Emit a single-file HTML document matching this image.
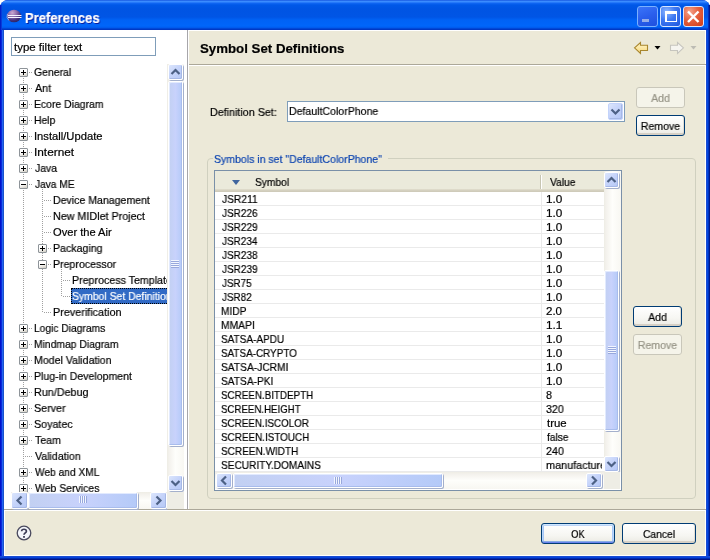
<!DOCTYPE html><html><head><meta charset="utf-8"><style>
*{box-sizing:border-box}
html,body{margin:0;padding:0;width:710px;height:560px;overflow:hidden;background:#fff;font-family:"Liberation Sans",sans-serif}
.a{position:absolute}
.t{position:absolute;white-space:nowrap;line-height:20px;height:20px;font-family:"Liberation Sans",sans-serif;-webkit-text-stroke:0.2px currentColor;will-change:transform}
svg{position:absolute;overflow:visible}
</style></head><body>
<div class="a" style="left:0;top:0;width:710px;height:560px;border-radius:8px 8px 0 0;overflow:hidden;background:#0831D9">
<div class="a" style="left:0;top:0;width:710px;height:30px;background:linear-gradient(180deg,#0A44D6 0px,#3C8EFF 1px,#3A8AFE 2px,#1268F4 3px,#0058E8 5px,#0054E3 9px,#0055E5 17px,#0062F5 20px,#0066FA 26px,#0058EA 28px,#0038C4 29px,#0038C4 30px)"></div>
</div>
<div class="a" style="left:0px;top:5px;width:2px;height:25px;background:linear-gradient(90deg,#0020C8 0,#0020C8 1px,#0A3AD8 1px)"></div>
<div class="a" style="left:708px;top:5px;width:2px;height:25px;background:linear-gradient(90deg,#0030C0 0,#0030C0 1px,#001890 1px)"></div>
<div class="a" style="left:0px;top:30px;width:4px;height:530px;background:linear-gradient(90deg,#0012CC 0,#0012CC 1px,#0A2ADA 1px,#0A2ADA 2px,#2264F0 2px,#2264F0 3px,#1A52CC 3px)"></div>
<div class="a" style="left:706px;top:30px;width:4px;height:530px;background:linear-gradient(90deg,#1A4CD2 0,#1A4CD2 1px,#0648E2 1px,#0648E2 2px,#0034BE 2px,#0034BE 3px,#00188F 3px)"></div>
<div class="a" style="left:0px;top:556px;width:710px;height:4px;background:linear-gradient(180deg,#1A4CD2 0,#1A4CD2 1px,#0644DE 1px,#0644DE 2px,#002CB0 2px,#002CB0 3px,#001488 3px)"></div>
<svg style="left:6px;top:9px" width="17" height="14" viewBox="0 0 17 14">
<defs><radialGradient id="eg" cx="0.38" cy="0.25" r="0.85"><stop offset="0" stop-color="#CBA9D2"/><stop offset="0.4" stop-color="#8A68A8"/><stop offset="0.72" stop-color="#3E2E7A"/><stop offset="1" stop-color="#22205A"/></radialGradient></defs>
<ellipse cx="8" cy="7" rx="7" ry="6.3" fill="url(#eg)"/>
<path d="M1.4 5 A7 6.3 0 0 0 3 11.5" fill="none" stroke="#C8D8FF" stroke-width="0.8" opacity="0.8"/>
<rect x="2" y="6" width="13.5" height="1" fill="#F4F4FF"/>
<rect x="2" y="8" width="13.5" height="1" fill="#F4F4FF"/>
</svg>
<div class="t" style="left:25px;top:8px;font-size:14px;font-weight:700;color:#fff;transform:scaleX(0.9300);transform-origin:0 0;text-shadow:1px 1px 0 #0A1E9E;">Preferences</div>
<div class="a" style="left:637px;top:6px;width:21px;height:21px;border:1px solid #7AB0FF;border-radius:3px;background:linear-gradient(160deg,#3A74FA 0,#2A5EEC 50%,#1E50DE 100%)"></div>
<div class="a" style="left:660px;top:6px;width:21px;height:21px;border:1px solid #D9E6FF;border-radius:3px;background:radial-gradient(circle at 30% 25%,#8DB6FF 0,#3D78F2 45%,#1F55DC 100%)"></div>
<div class="a" style="left:683px;top:6px;width:21px;height:21px;border:1px solid #D9E6FF;border-radius:3px;background:radial-gradient(circle at 30% 25%,#F5A48C 0,#E5603E 45%,#CF3C18 100%)"></div>
<div class="a" style="left:642px;top:19px;width:7px;height:3px;background:#94ACE8"></div>
<div class="a" style="left:665px;top:11px;width:12px;height:11px;border:1px solid #fff;border-left-width:2px;border-top-width:3px"></div>
<svg style="left:686px;top:10px" width="14" height="13" viewBox="0 0 14 13"><path d="M2 1.5 L12.5 12 M12.5 1.5 L2 12" stroke="#fff" stroke-width="2.4"/></svg>
<div class="a" style="left:4px;top:30px;width:702px;height:526px;background:#ECE9D8"></div>
<div class="a" style="left:705px;top:30px;width:1px;height:526px;background:#fff"></div>
<div class="a" style="left:4px;top:30px;width:1px;height:526px;background:#fff"></div>
<div class="a" style="left:4px;top:555px;width:702px;height:1px;background:#fff"></div>
<div class="a" style="left:4px;top:30px;width:183px;height:479px;background:#fff"></div>
<div class="a" style="left:187px;top:30px;width:1px;height:479px;background:#A7A6AA"></div>
<div class="a" style="left:188px;top:30px;width:1px;height:479px;background:#fff"></div>
<div class="a" style="left:189px;top:30px;width:517px;height:1px;background:#fff"></div>
<div class="a" style="left:189px;top:64px;width:517px;height:1px;background:#ACA899"></div>
<div class="a" style="left:189px;top:65px;width:517px;height:1px;background:#fff"></div>
<div class="a" style="left:4px;top:509px;width:702px;height:1px;background:#ACA899"></div>
<div class="a" style="left:4px;top:510px;width:702px;height:1px;background:#fff"></div>
<div class="a" style="left:11px;top:37px;width:145px;height:19px;border:1px solid #7F9DB9;background:#fff"></div>
<div class="t" style="left:13.73px;top:37px;font-size:11px;font-weight:400;color:#000;transform:scaleX(1.0426);transform-origin:0 0;">type filter text</div>
<div class="a" style="left:11px;top:64px;width:156px;height:428px;overflow:hidden">
<div class="a" style="left:12px;top:8px;width:1px;height:425px;background:repeating-linear-gradient(180deg,#A0A0A0 0,#A0A0A0 1px,transparent 1px,transparent 2px)"></div>
<div class="a" style="left:31px;top:125px;width:1px;height:124px;background:repeating-linear-gradient(180deg,#A0A0A0 0,#A0A0A0 1px,transparent 1px,transparent 2px)"></div>
<div class="a" style="left:50px;top:205px;width:1px;height:28px;background:repeating-linear-gradient(180deg,#A0A0A0 0,#A0A0A0 1px,transparent 1px,transparent 2px)"></div>
<div class="a" style="left:18px;top:8px;width:3px;height:1px;background:repeating-linear-gradient(90deg,#A0A0A0 0,#A0A0A0 1px,transparent 1px,transparent 2px)"></div>
<div class="a" style="left:8px;top:4px;width:9px;height:9px;border:1px solid #8E9499;background:linear-gradient(160deg,#fff 0,#fff 45%,#CFCBC0 100%);border-radius:1px"></div>
<div class="a" style="left:10px;top:8px;width:5px;height:1px;background:#000"></div>
<div class="a" style="left:12px;top:6px;width:1px;height:5px;background:#000"></div>
<div class="t" style="left:23.369999999999997px;top:-2px;font-size:11px;color:#000;transform:scaleX(0.9507);transform-origin:0 0;">General</div>
<div class="a" style="left:18px;top:24px;width:3px;height:1px;background:repeating-linear-gradient(90deg,#A0A0A0 0,#A0A0A0 1px,transparent 1px,transparent 2px)"></div>
<div class="a" style="left:8px;top:20px;width:9px;height:9px;border:1px solid #8E9499;background:linear-gradient(160deg,#fff 0,#fff 45%,#CFCBC0 100%);border-radius:1px"></div>
<div class="a" style="left:10px;top:24px;width:5px;height:1px;background:#000"></div>
<div class="a" style="left:12px;top:22px;width:1px;height:5px;background:#000"></div>
<div class="t" style="left:23.880000000000003px;top:14px;font-size:11px;color:#000;transform:scaleX(0.9739);transform-origin:0 0;">Ant</div>
<div class="a" style="left:18px;top:40px;width:3px;height:1px;background:repeating-linear-gradient(90deg,#A0A0A0 0,#A0A0A0 1px,transparent 1px,transparent 2px)"></div>
<div class="a" style="left:8px;top:36px;width:9px;height:9px;border:1px solid #8E9499;background:linear-gradient(160deg,#fff 0,#fff 45%,#CFCBC0 100%);border-radius:1px"></div>
<div class="a" style="left:10px;top:40px;width:5px;height:1px;background:#000"></div>
<div class="a" style="left:12px;top:38px;width:1px;height:5px;background:#000"></div>
<div class="t" style="left:23.04px;top:30px;font-size:11px;color:#000;transform:scaleX(0.9478);transform-origin:0 0;">Ecore Diagram</div>
<div class="a" style="left:18px;top:56px;width:3px;height:1px;background:repeating-linear-gradient(90deg,#A0A0A0 0,#A0A0A0 1px,transparent 1px,transparent 2px)"></div>
<div class="a" style="left:8px;top:52px;width:9px;height:9px;border:1px solid #8E9499;background:linear-gradient(160deg,#fff 0,#fff 45%,#CFCBC0 100%);border-radius:1px"></div>
<div class="a" style="left:10px;top:56px;width:5px;height:1px;background:#000"></div>
<div class="a" style="left:12px;top:54px;width:1px;height:5px;background:#000"></div>
<div class="t" style="left:23.049999999999997px;top:46px;font-size:11px;color:#000;transform:scaleX(0.9407);transform-origin:0 0;">Help</div>
<div class="a" style="left:18px;top:72px;width:3px;height:1px;background:repeating-linear-gradient(90deg,#A0A0A0 0,#A0A0A0 1px,transparent 1px,transparent 2px)"></div>
<div class="a" style="left:8px;top:68px;width:9px;height:9px;border:1px solid #8E9499;background:linear-gradient(160deg,#fff 0,#fff 45%,#CFCBC0 100%);border-radius:1px"></div>
<div class="a" style="left:10px;top:72px;width:5px;height:1px;background:#000"></div>
<div class="a" style="left:12px;top:70px;width:1px;height:5px;background:#000"></div>
<div class="t" style="left:22.869999999999997px;top:62px;font-size:11px;color:#000;transform:scaleX(1.0181);transform-origin:0 0;">Install/Update</div>
<div class="a" style="left:18px;top:88px;width:3px;height:1px;background:repeating-linear-gradient(90deg,#A0A0A0 0,#A0A0A0 1px,transparent 1px,transparent 2px)"></div>
<div class="a" style="left:8px;top:84px;width:9px;height:9px;border:1px solid #8E9499;background:linear-gradient(160deg,#fff 0,#fff 45%,#CFCBC0 100%);border-radius:1px"></div>
<div class="a" style="left:10px;top:88px;width:5px;height:1px;background:#000"></div>
<div class="a" style="left:12px;top:86px;width:1px;height:5px;background:#000"></div>
<div class="t" style="left:22.810000000000002px;top:78px;font-size:11px;color:#000;transform:scaleX(1.0759);transform-origin:0 0;">Internet</div>
<div class="a" style="left:18px;top:104px;width:3px;height:1px;background:repeating-linear-gradient(90deg,#A0A0A0 0,#A0A0A0 1px,transparent 1px,transparent 2px)"></div>
<div class="a" style="left:8px;top:100px;width:9px;height:9px;border:1px solid #8E9499;background:linear-gradient(160deg,#fff 0,#fff 45%,#CFCBC0 100%);border-radius:1px"></div>
<div class="a" style="left:10px;top:104px;width:5px;height:1px;background:#000"></div>
<div class="a" style="left:12px;top:102px;width:1px;height:5px;background:#000"></div>
<div class="t" style="left:23.740000000000002px;top:94px;font-size:11px;color:#000;transform:scaleX(0.9533);transform-origin:0 0;">Java</div>
<div class="a" style="left:18px;top:120px;width:3px;height:1px;background:repeating-linear-gradient(90deg,#A0A0A0 0,#A0A0A0 1px,transparent 1px,transparent 2px)"></div>
<div class="a" style="left:8px;top:116px;width:9px;height:9px;border:1px solid #8E9499;background:linear-gradient(160deg,#fff 0,#fff 45%,#CFCBC0 100%);border-radius:1px"></div>
<div class="a" style="left:10px;top:120px;width:5px;height:1px;background:#000"></div>
<div class="t" style="left:23.740000000000002px;top:110px;font-size:11px;color:#000;transform:scaleX(0.9249);transform-origin:0 0;">Java ME</div>
<div class="a" style="left:33px;top:136px;width:7px;height:1px;background:repeating-linear-gradient(90deg,#A0A0A0 0,#A0A0A0 1px,transparent 1px,transparent 2px)"></div>
<div class="t" style="left:42.03px;top:126px;font-size:11px;color:#000;transform:scaleX(0.9604);transform-origin:0 0;">Device Management</div>
<div class="a" style="left:33px;top:152px;width:7px;height:1px;background:repeating-linear-gradient(90deg,#A0A0A0 0,#A0A0A0 1px,transparent 1px,transparent 2px)"></div>
<div class="t" style="left:42.02px;top:142px;font-size:11px;color:#000;transform:scaleX(0.9767);transform-origin:0 0;">New MIDlet Project</div>
<div class="a" style="left:33px;top:168px;width:7px;height:1px;background:repeating-linear-gradient(90deg,#A0A0A0 0,#A0A0A0 1px,transparent 1px,transparent 2px)"></div>
<div class="t" style="left:42.37px;top:158px;font-size:11px;color:#000;transform:scaleX(1.0104);transform-origin:0 0;">Over the Air</div>
<div class="a" style="left:37px;top:184px;width:3px;height:1px;background:repeating-linear-gradient(90deg,#A0A0A0 0,#A0A0A0 1px,transparent 1px,transparent 2px)"></div>
<div class="a" style="left:27px;top:180px;width:9px;height:9px;border:1px solid #8E9499;background:linear-gradient(160deg,#fff 0,#fff 45%,#CFCBC0 100%);border-radius:1px"></div>
<div class="a" style="left:29px;top:184px;width:5px;height:1px;background:#000"></div>
<div class="a" style="left:31px;top:182px;width:1px;height:5px;background:#000"></div>
<div class="t" style="left:42.03px;top:174px;font-size:11px;color:#000;transform:scaleX(0.9640);transform-origin:0 0;">Packaging</div>
<div class="a" style="left:37px;top:200px;width:3px;height:1px;background:repeating-linear-gradient(90deg,#A0A0A0 0,#A0A0A0 1px,transparent 1px,transparent 2px)"></div>
<div class="a" style="left:27px;top:196px;width:9px;height:9px;border:1px solid #8E9499;background:linear-gradient(160deg,#fff 0,#fff 45%,#CFCBC0 100%);border-radius:1px"></div>
<div class="a" style="left:29px;top:200px;width:5px;height:1px;background:#000"></div>
<div class="t" style="left:42.03px;top:190px;font-size:11px;color:#000;transform:scaleX(0.9634);transform-origin:0 0;">Preprocessor</div>
<div class="a" style="left:52px;top:216px;width:7px;height:1px;background:repeating-linear-gradient(90deg,#A0A0A0 0,#A0A0A0 1px,transparent 1px,transparent 2px)"></div>
<div class="t" style="left:61.03px;top:206px;font-size:11px;color:#000;transform:scaleX(0.9686);transform-origin:0 0;">Preprocess Templates</div>
<div class="a" style="left:52px;top:232px;width:7px;height:1px;background:repeating-linear-gradient(90deg,#A0A0A0 0,#A0A0A0 1px,transparent 1px,transparent 2px)"></div>
<div class="a" style="left:60px;top:224px;width:100px;height:16px;background:#316AC5;outline:1px dotted #000;outline-offset:-1px"></div>
<div class="t" style="left:61.43000000000001px;top:222px;font-size:11px;color:#fff;transform:scaleX(0.9470);transform-origin:0 0;">Symbol Set Definitions</div>
<div class="a" style="left:33px;top:248px;width:7px;height:1px;background:repeating-linear-gradient(90deg,#A0A0A0 0,#A0A0A0 1px,transparent 1px,transparent 2px)"></div>
<div class="t" style="left:42.01px;top:238px;font-size:11px;color:#000;transform:scaleX(0.9838);transform-origin:0 0;">Preverification</div>
<div class="a" style="left:18px;top:264px;width:3px;height:1px;background:repeating-linear-gradient(90deg,#A0A0A0 0,#A0A0A0 1px,transparent 1px,transparent 2px)"></div>
<div class="a" style="left:8px;top:260px;width:9px;height:9px;border:1px solid #8E9499;background:linear-gradient(160deg,#fff 0,#fff 45%,#CFCBC0 100%);border-radius:1px"></div>
<div class="a" style="left:10px;top:264px;width:5px;height:1px;background:#000"></div>
<div class="a" style="left:12px;top:262px;width:1px;height:5px;background:#000"></div>
<div class="t" style="left:23.060000000000002px;top:254px;font-size:11px;color:#000;transform:scaleX(0.9316);transform-origin:0 0;">Logic Diagrams</div>
<div class="a" style="left:18px;top:280px;width:3px;height:1px;background:repeating-linear-gradient(90deg,#A0A0A0 0,#A0A0A0 1px,transparent 1px,transparent 2px)"></div>
<div class="a" style="left:8px;top:276px;width:9px;height:9px;border:1px solid #8E9499;background:linear-gradient(160deg,#fff 0,#fff 45%,#CFCBC0 100%);border-radius:1px"></div>
<div class="a" style="left:10px;top:280px;width:5px;height:1px;background:#000"></div>
<div class="a" style="left:12px;top:278px;width:1px;height:5px;background:#000"></div>
<div class="t" style="left:23.049999999999997px;top:270px;font-size:11px;color:#000;transform:scaleX(0.9405);transform-origin:0 0;">Mindmap Diagram</div>
<div class="a" style="left:18px;top:296px;width:3px;height:1px;background:repeating-linear-gradient(90deg,#A0A0A0 0,#A0A0A0 1px,transparent 1px,transparent 2px)"></div>
<div class="a" style="left:8px;top:292px;width:9px;height:9px;border:1px solid #8E9499;background:linear-gradient(160deg,#fff 0,#fff 45%,#CFCBC0 100%);border-radius:1px"></div>
<div class="a" style="left:10px;top:296px;width:5px;height:1px;background:#000"></div>
<div class="a" style="left:12px;top:294px;width:1px;height:5px;background:#000"></div>
<div class="t" style="left:23.03px;top:286px;font-size:11px;color:#000;transform:scaleX(0.9627);transform-origin:0 0;">Model Validation</div>
<div class="a" style="left:18px;top:312px;width:3px;height:1px;background:repeating-linear-gradient(90deg,#A0A0A0 0,#A0A0A0 1px,transparent 1px,transparent 2px)"></div>
<div class="a" style="left:8px;top:308px;width:9px;height:9px;border:1px solid #8E9499;background:linear-gradient(160deg,#fff 0,#fff 45%,#CFCBC0 100%);border-radius:1px"></div>
<div class="a" style="left:10px;top:312px;width:5px;height:1px;background:#000"></div>
<div class="a" style="left:12px;top:310px;width:1px;height:5px;background:#000"></div>
<div class="t" style="left:23.03px;top:302px;font-size:11px;color:#000;transform:scaleX(0.9588);transform-origin:0 0;">Plug-in Development</div>
<div class="a" style="left:18px;top:328px;width:3px;height:1px;background:repeating-linear-gradient(90deg,#A0A0A0 0,#A0A0A0 1px,transparent 1px,transparent 2px)"></div>
<div class="a" style="left:8px;top:324px;width:9px;height:9px;border:1px solid #8E9499;background:linear-gradient(160deg,#fff 0,#fff 45%,#CFCBC0 100%);border-radius:1px"></div>
<div class="a" style="left:10px;top:328px;width:5px;height:1px;background:#000"></div>
<div class="a" style="left:12px;top:326px;width:1px;height:5px;background:#000"></div>
<div class="t" style="left:23.020000000000003px;top:318px;font-size:11px;color:#000;transform:scaleX(0.9801);transform-origin:0 0;">Run/Debug</div>
<div class="a" style="left:18px;top:344px;width:3px;height:1px;background:repeating-linear-gradient(90deg,#A0A0A0 0,#A0A0A0 1px,transparent 1px,transparent 2px)"></div>
<div class="a" style="left:8px;top:340px;width:9px;height:9px;border:1px solid #8E9499;background:linear-gradient(160deg,#fff 0,#fff 45%,#CFCBC0 100%);border-radius:1px"></div>
<div class="a" style="left:10px;top:344px;width:5px;height:1px;background:#000"></div>
<div class="a" style="left:12px;top:342px;width:1px;height:5px;background:#000"></div>
<div class="t" style="left:23.409999999999997px;top:334px;font-size:11px;color:#000;transform:scaleX(0.9772);transform-origin:0 0;">Server</div>
<div class="a" style="left:18px;top:360px;width:3px;height:1px;background:repeating-linear-gradient(90deg,#A0A0A0 0,#A0A0A0 1px,transparent 1px,transparent 2px)"></div>
<div class="a" style="left:8px;top:356px;width:9px;height:9px;border:1px solid #8E9499;background:linear-gradient(160deg,#fff 0,#fff 45%,#CFCBC0 100%);border-radius:1px"></div>
<div class="a" style="left:10px;top:360px;width:5px;height:1px;background:#000"></div>
<div class="a" style="left:12px;top:358px;width:1px;height:5px;background:#000"></div>
<div class="t" style="left:23.409999999999997px;top:350px;font-size:11px;color:#000;transform:scaleX(0.9746);transform-origin:0 0;">Soyatec</div>
<div class="a" style="left:18px;top:376px;width:3px;height:1px;background:repeating-linear-gradient(90deg,#A0A0A0 0,#A0A0A0 1px,transparent 1px,transparent 2px)"></div>
<div class="a" style="left:8px;top:372px;width:9px;height:9px;border:1px solid #8E9499;background:linear-gradient(160deg,#fff 0,#fff 45%,#CFCBC0 100%);border-radius:1px"></div>
<div class="a" style="left:10px;top:376px;width:5px;height:1px;background:#000"></div>
<div class="a" style="left:12px;top:374px;width:1px;height:5px;background:#000"></div>
<div class="t" style="left:23.659999999999997px;top:366px;font-size:11px;color:#000;transform:scaleX(0.9640);transform-origin:0 0;">Team</div>
<div class="a" style="left:14px;top:392px;width:7px;height:1px;background:repeating-linear-gradient(90deg,#A0A0A0 0,#A0A0A0 1px,transparent 1px,transparent 2px)"></div>
<div class="t" style="left:23.85px;top:382px;font-size:11px;color:#000;transform:scaleX(0.9622);transform-origin:0 0;">Validation</div>
<div class="a" style="left:18px;top:408px;width:3px;height:1px;background:repeating-linear-gradient(90deg,#A0A0A0 0,#A0A0A0 1px,transparent 1px,transparent 2px)"></div>
<div class="a" style="left:8px;top:404px;width:9px;height:9px;border:1px solid #8E9499;background:linear-gradient(160deg,#fff 0,#fff 45%,#CFCBC0 100%);border-radius:1px"></div>
<div class="a" style="left:10px;top:408px;width:5px;height:1px;background:#000"></div>
<div class="a" style="left:12px;top:406px;width:1px;height:5px;background:#000"></div>
<div class="t" style="left:23.86px;top:398px;font-size:11px;color:#000;transform:scaleX(0.9257);transform-origin:0 0;">Web and XML</div>
<div class="a" style="left:18px;top:424px;width:3px;height:1px;background:repeating-linear-gradient(90deg,#A0A0A0 0,#A0A0A0 1px,transparent 1px,transparent 2px)"></div>
<div class="a" style="left:8px;top:420px;width:9px;height:9px;border:1px solid #8E9499;background:linear-gradient(160deg,#fff 0,#fff 45%,#CFCBC0 100%);border-radius:1px"></div>
<div class="a" style="left:10px;top:424px;width:5px;height:1px;background:#000"></div>
<div class="a" style="left:12px;top:422px;width:1px;height:5px;background:#000"></div>
<div class="t" style="left:23.85px;top:414px;font-size:11px;color:#000;transform:scaleX(0.9520);transform-origin:0 0;">Web Services</div>
</div>
<div class="a" style="left:167px;top:64px;width:17px;height:428px;background:linear-gradient(90deg,#EEEDE5 0,#F3F1EC 2px,#FEFEFB 50%,#F8F7F2 100%)"></div>
<div class="a" style="left:168px;top:64px;width:15px;height:16px;border:1px solid #FFFFFF;border-radius:2px;background:linear-gradient(135deg,#DCE6FC 0,#C6D4FA 45%,#B5C8F6 100%);box-shadow:1px 1px 0 #A4B0CC,inset -1px -1px 0 #A6B8E6"></div>
<svg style="left:0;top:0" width="710" height="560"><path d="M171.5 74.0 L175.5 70.0 L179.5 74.0" fill="none" stroke="#4D6185" stroke-width="2.2"/></svg>
<div class="a" style="left:168px;top:81px;width:15px;height:365px;border:1px solid #FFFFFF;border-radius:2px;background:linear-gradient(90deg,#C2D0F2 0,#C8D2FC 50%,#B4CAF8 100%);box-shadow:1px 1px 0 #A4B0CC,inset -1px -1px 0 #A8BCEC,inset 1px 1px 0 #E2EAFE"></div>
<div class="a" style="left:171px;top:260px;width:8px;height:1px;background:#F2F6FF"></div>
<div class="a" style="left:171px;top:261px;width:8px;height:1px;background:#98A8DC"></div>
<div class="a" style="left:171px;top:262px;width:8px;height:1px;background:#F2F6FF"></div>
<div class="a" style="left:171px;top:263px;width:8px;height:1px;background:#98A8DC"></div>
<div class="a" style="left:171px;top:264px;width:8px;height:1px;background:#F2F6FF"></div>
<div class="a" style="left:171px;top:265px;width:8px;height:1px;background:#98A8DC"></div>
<div class="a" style="left:171px;top:266px;width:8px;height:1px;background:#F2F6FF"></div>
<div class="a" style="left:171px;top:267px;width:8px;height:1px;background:#98A8DC"></div>
<div class="a" style="left:168px;top:475px;width:15px;height:16px;border:1px solid #FFFFFF;border-radius:2px;background:linear-gradient(135deg,#DCE6FC 0,#C6D4FA 45%,#B5C8F6 100%);box-shadow:1px 1px 0 #A4B0CC,inset -1px -1px 0 #A6B8E6"></div>
<svg style="left:0;top:0" width="710" height="560"><path d="M171.5 481.0 L175.5 485.0 L179.5 481.0" fill="none" stroke="#4D6185" stroke-width="2.2"/></svg>
<div class="a" style="left:11px;top:492px;width:156px;height:17px;background:linear-gradient(180deg,#EEEDE5 0,#F3F1EC 2px,#FEFEFB 50%,#F8F7F2 100%)"></div>
<div class="a" style="left:11px;top:492px;width:17px;height:17px;border:1px solid #FFFFFF;border-radius:2px;background:linear-gradient(135deg,#DCE6FC 0,#C6D4FA 45%,#B5C8F6 100%);box-shadow:1px 1px 0 #A4B0CC,inset -1px -1px 0 #A6B8E6"></div>
<svg style="left:0;top:0" width="710" height="560"><path d="M21.5 496.5 L17.5 500.5 L21.5 504.5" fill="none" stroke="#4D6185" stroke-width="2.2"/></svg>
<div class="a" style="left:28px;top:492px;width:110px;height:17px;border:1px solid #FFFFFF;border-radius:2px;background:linear-gradient(90deg,#C2D0F2 0,#C8D2FC 50%,#B4CAF8 100%);box-shadow:1px 1px 0 #A4B0CC,inset -1px -1px 0 #A8BCEC,inset 1px 1px 0 #E2EAFE"></div>
<div class="a" style="left:79px;top:496px;width:1px;height:7px;background:#F2F6FF"></div>
<div class="a" style="left:80px;top:496px;width:1px;height:7px;background:#98A8DC"></div>
<div class="a" style="left:81px;top:496px;width:1px;height:7px;background:#F2F6FF"></div>
<div class="a" style="left:82px;top:496px;width:1px;height:7px;background:#98A8DC"></div>
<div class="a" style="left:83px;top:496px;width:1px;height:7px;background:#F2F6FF"></div>
<div class="a" style="left:84px;top:496px;width:1px;height:7px;background:#98A8DC"></div>
<div class="a" style="left:85px;top:496px;width:1px;height:7px;background:#F2F6FF"></div>
<div class="a" style="left:86px;top:496px;width:1px;height:7px;background:#98A8DC"></div>
<div class="a" style="left:150px;top:492px;width:17px;height:17px;border:1px solid #FFFFFF;border-radius:2px;background:linear-gradient(135deg,#DCE6FC 0,#C6D4FA 45%,#B5C8F6 100%);box-shadow:1px 1px 0 #A4B0CC,inset -1px -1px 0 #A6B8E6"></div>
<svg style="left:0;top:0" width="710" height="560"><path d="M156.5 496.5 L160.5 500.5 L156.5 504.5" fill="none" stroke="#4D6185" stroke-width="2.2"/></svg>
<div class="a" style="left:167px;top:492px;width:17px;height:17px;background:#EEEDE5"></div>
<div class="t" style="left:200px;top:39px;font-size:13px;font-weight:700;color:#000;transform:scaleX(1.0200);transform-origin:0 0;">Symbol Set Definitions</div>
<svg style="left:633px;top:41px" width="16" height="14" viewBox="0 0 16 14">
<defs><linearGradient id="ag" x1="0" y1="0" x2="0" y2="1"><stop offset="0" stop-color="#FFF6CC"/><stop offset="1" stop-color="#F9D87A"/></linearGradient></defs>
<path d="M1.5 6.8 L7.5 1.5 L7.5 4.3 L14.5 4.3 L14.5 9.5 L7.5 9.5 L7.5 12.5 Z" fill="url(#ag)" stroke="#A8862E" stroke-width="1.1" stroke-linejoin="miter"/></svg>
<svg style="left:654px;top:46px" width="7" height="4"><path d="M0.5 0 L6.5 0 L3.5 3.6 Z" fill="#000"/></svg>
<svg style="left:669px;top:41px" width="16" height="14" viewBox="0 0 16 14">
<path d="M14.5 6.8 L8.5 1.5 L8.5 4.3 L1.5 4.3 L1.5 9.5 L8.5 9.5 L8.5 12.5 Z" fill="#F6F5F0" stroke="#C6C5BE" stroke-width="1.1"/></svg>
<svg style="left:690px;top:46px" width="7" height="4"><path d="M0.5 0 L6.5 0 L3.5 3.6 Z" fill="#BDBCB4"/></svg>
<div class="t" style="left:210.02px;top:102px;font-size:11px;font-weight:400;color:#000;transform:scaleX(0.9756);transform-origin:0 0;">Definition Set:</div>
<div class="a" style="left:287px;top:101px;width:338px;height:21px;border:1px solid #7F9DB9;background:#fff"></div>
<div class="t" style="left:289.03px;top:101px;font-size:11px;font-weight:400;color:#000;transform:scaleX(0.9606);transform-origin:0 0;">DefaultColorPhone</div>
<div class="a" style="left:608px;top:103px;width:15px;height:17px;border:1px solid #C3D3FB;border-radius:2px;background:linear-gradient(135deg,#DCE6FC 0,#C6D4FA 45%,#B5C8F6 100%);box-shadow:inset -1px -1px 0 #A6B8E6"></div>
<svg style="left:0;top:0" width="710" height="560"><path d="M611.5 109.5 L615.5 113.5 L619.5 109.5" fill="none" stroke="#4D6185" stroke-width="2.2"/></svg>
<div class="a" style="left:636px;top:87px;width:49px;height:21px;border:1px solid #C9C7BA;border-radius:3px;background:#F5F4EA"></div>
<div class="t" style="left:636px;top:88px;width:49px;text-align:center;font-size:11px;color:#959385;transform:scaleX(0.9542);transform-origin:24.5px 0">Add</div>
<div class="a" style="left:636px;top:115px;width:49px;height:21px;border:1px solid #003C74;border-radius:3px;background:linear-gradient(180deg,#FFFFFF 0,#F6F6F2 60%,#EBEAE3 100%);box-shadow:inset 0 -2px 0 #D6D0C5,inset -1px 0 0 #E2DED4"></div>
<div class="t" style="left:636px;top:116px;width:49px;text-align:center;font-size:11px;color:#000;transform:scaleX(0.9601);transform-origin:24.5px 0">Remove</div>
<div class="a" style="left:207px;top:158px;width:489px;height:341px;border:1px solid #D0D0BF;border-radius:4px"></div>
<div class="a" style="left:213px;top:150px;width:175px;height:14px;background:#ECE9D8"></div>
<div class="t" style="left:214.42px;top:149px;font-size:11px;font-weight:400;color:#0C44B0;transform:scaleX(0.9572);transform-origin:0 0;">Symbols in set "DefaultColorPhone"</div>
<div class="a" style="left:214px;top:170px;width:408px;height:321px;border:1px solid #7A90A8;background:#fff"></div>
<div class="a" style="left:215px;top:171px;width:389px;height:21px;background:linear-gradient(180deg,#EBEADB 0,#EBEADB 18px,#E2DFCF 18px,#D9D5C4 19px,#CFCBBA 20px,#CFCBBA 21px)"></div>
<div class="a" style="left:540px;top:175px;width:1px;height:14px;background:#C7C5B2"></div>
<div class="a" style="left:541px;top:175px;width:1px;height:14px;background:#fff"></div>
<svg style="left:232px;top:180px" width="8" height="5"><path d="M0 0 L8 0 L4 5 Z" fill="#40659E"/></svg>
<div class="t" style="left:255.44px;top:172px;font-size:11px;font-weight:400;color:#000;transform:scaleX(0.9308);transform-origin:0 0;">Symbol</div>
<div class="t" style="left:549.85px;top:172px;font-size:11px;font-weight:400;color:#000;transform:scaleX(0.9326);transform-origin:0 0;">Value</div>
<div class="a" style="left:215px;top:192px;width:389px;height:280px;overflow:hidden">
<div class="a" style="left:0;top:13px;width:389px;height:1px;background:#EAEAEA"></div>
<div class="a" style="left:326px;top:0px;width:1px;height:14px;background:#EAEAEA"></div>
<div class="t" style="left:6.74px;top:-3px;font-size:11px;transform:scaleX(0.9300);transform-origin:0 0">JSR211</div>
<div class="a" style="left:331px;top:0px;width:56px;height:14px;overflow:hidden"><div class="t" style="left:0.01px;top:-3px;font-size:11px;transform:scaleX(1.0680);transform-origin:0 0">1.0</div></div>
<div class="a" style="left:0;top:27px;width:389px;height:1px;background:#EAEAEA"></div>
<div class="a" style="left:326px;top:14px;width:1px;height:14px;background:#EAEAEA"></div>
<div class="t" style="left:6.74px;top:11px;font-size:11px;transform:scaleX(0.9091);transform-origin:0 0">JSR226</div>
<div class="a" style="left:331px;top:14px;width:56px;height:14px;overflow:hidden"><div class="t" style="left:0.01px;top:-3px;font-size:11px;transform:scaleX(1.0680);transform-origin:0 0">1.0</div></div>
<div class="a" style="left:0;top:41px;width:389px;height:1px;background:#EAEAEA"></div>
<div class="a" style="left:326px;top:28px;width:1px;height:14px;background:#EAEAEA"></div>
<div class="t" style="left:6.74px;top:25px;font-size:11px;transform:scaleX(0.9100);transform-origin:0 0">JSR229</div>
<div class="a" style="left:331px;top:28px;width:56px;height:14px;overflow:hidden"><div class="t" style="left:0.01px;top:-3px;font-size:11px;transform:scaleX(1.0680);transform-origin:0 0">1.0</div></div>
<div class="a" style="left:0;top:55px;width:389px;height:1px;background:#EAEAEA"></div>
<div class="a" style="left:326px;top:42px;width:1px;height:14px;background:#EAEAEA"></div>
<div class="t" style="left:6.74px;top:39px;font-size:11px;transform:scaleX(0.9053);transform-origin:0 0">JSR234</div>
<div class="a" style="left:331px;top:42px;width:56px;height:14px;overflow:hidden"><div class="t" style="left:0.01px;top:-3px;font-size:11px;transform:scaleX(1.0680);transform-origin:0 0">1.0</div></div>
<div class="a" style="left:0;top:69px;width:389px;height:1px;background:#EAEAEA"></div>
<div class="a" style="left:326px;top:56px;width:1px;height:14px;background:#EAEAEA"></div>
<div class="t" style="left:6.74px;top:53px;font-size:11px;transform:scaleX(0.9089);transform-origin:0 0">JSR238</div>
<div class="a" style="left:331px;top:56px;width:56px;height:14px;overflow:hidden"><div class="t" style="left:0.01px;top:-3px;font-size:11px;transform:scaleX(1.0680);transform-origin:0 0">1.0</div></div>
<div class="a" style="left:0;top:83px;width:389px;height:1px;background:#EAEAEA"></div>
<div class="a" style="left:326px;top:70px;width:1px;height:14px;background:#EAEAEA"></div>
<div class="t" style="left:6.74px;top:67px;font-size:11px;transform:scaleX(0.9100);transform-origin:0 0">JSR239</div>
<div class="a" style="left:331px;top:70px;width:56px;height:14px;overflow:hidden"><div class="t" style="left:0.01px;top:-3px;font-size:11px;transform:scaleX(1.0680);transform-origin:0 0">1.0</div></div>
<div class="a" style="left:0;top:97px;width:389px;height:1px;background:#EAEAEA"></div>
<div class="a" style="left:326px;top:84px;width:1px;height:14px;background:#EAEAEA"></div>
<div class="t" style="left:6.75px;top:81px;font-size:11px;transform:scaleX(0.8951);transform-origin:0 0">JSR75</div>
<div class="a" style="left:331px;top:84px;width:56px;height:14px;overflow:hidden"><div class="t" style="left:0.01px;top:-3px;font-size:11px;transform:scaleX(1.0680);transform-origin:0 0">1.0</div></div>
<div class="a" style="left:0;top:111px;width:389px;height:1px;background:#EAEAEA"></div>
<div class="a" style="left:326px;top:98px;width:1px;height:14px;background:#EAEAEA"></div>
<div class="t" style="left:6.75px;top:95px;font-size:11px;transform:scaleX(0.8977);transform-origin:0 0">JSR82</div>
<div class="a" style="left:331px;top:98px;width:56px;height:14px;overflow:hidden"><div class="t" style="left:0.01px;top:-3px;font-size:11px;transform:scaleX(1.0680);transform-origin:0 0">1.0</div></div>
<div class="a" style="left:0;top:125px;width:389px;height:1px;background:#EAEAEA"></div>
<div class="a" style="left:326px;top:112px;width:1px;height:14px;background:#EAEAEA"></div>
<div class="t" style="left:6.07px;top:109px;font-size:11px;transform:scaleX(0.9225);transform-origin:0 0">MIDP</div>
<div class="a" style="left:331px;top:112px;width:56px;height:14px;overflow:hidden"><div class="t" style="left:0.32px;top:-3px;font-size:11px;transform:scaleX(1.0468);transform-origin:0 0">2.0</div></div>
<div class="a" style="left:0;top:139px;width:389px;height:1px;background:#EAEAEA"></div>
<div class="a" style="left:326px;top:126px;width:1px;height:14px;background:#EAEAEA"></div>
<div class="t" style="left:6.05px;top:123px;font-size:11px;transform:scaleX(0.9372);transform-origin:0 0">MMAPI</div>
<div class="a" style="left:331px;top:126px;width:56px;height:14px;overflow:hidden"><div class="t" style="left:-0.0px;top:-3px;font-size:11px;transform:scaleX(1.0762);transform-origin:0 0">1.1</div></div>
<div class="a" style="left:0;top:153px;width:389px;height:1px;background:#EAEAEA"></div>
<div class="a" style="left:326px;top:140px;width:1px;height:14px;background:#EAEAEA"></div>
<div class="t" style="left:6.45px;top:137px;font-size:11px;transform:scaleX(0.9097);transform-origin:0 0">SATSA-APDU</div>
<div class="a" style="left:331px;top:140px;width:56px;height:14px;overflow:hidden"><div class="t" style="left:0.01px;top:-3px;font-size:11px;transform:scaleX(1.0680);transform-origin:0 0">1.0</div></div>
<div class="a" style="left:0;top:167px;width:389px;height:1px;background:#EAEAEA"></div>
<div class="a" style="left:326px;top:154px;width:1px;height:14px;background:#EAEAEA"></div>
<div class="t" style="left:6.45px;top:151px;font-size:11px;transform:scaleX(0.8998);transform-origin:0 0">SATSA-CRYPTO</div>
<div class="a" style="left:331px;top:154px;width:56px;height:14px;overflow:hidden"><div class="t" style="left:0.01px;top:-3px;font-size:11px;transform:scaleX(1.0680);transform-origin:0 0">1.0</div></div>
<div class="a" style="left:0;top:181px;width:389px;height:1px;background:#EAEAEA"></div>
<div class="a" style="left:326px;top:168px;width:1px;height:14px;background:#EAEAEA"></div>
<div class="t" style="left:6.44px;top:165px;font-size:11px;transform:scaleX(0.9294);transform-origin:0 0">SATSA-JCRMI</div>
<div class="a" style="left:331px;top:168px;width:56px;height:14px;overflow:hidden"><div class="t" style="left:0.01px;top:-3px;font-size:11px;transform:scaleX(1.0680);transform-origin:0 0">1.0</div></div>
<div class="a" style="left:0;top:195px;width:389px;height:1px;background:#EAEAEA"></div>
<div class="a" style="left:326px;top:182px;width:1px;height:14px;background:#EAEAEA"></div>
<div class="t" style="left:6.44px;top:179px;font-size:11px;transform:scaleX(0.9244);transform-origin:0 0">SATSA-PKI</div>
<div class="a" style="left:331px;top:182px;width:56px;height:14px;overflow:hidden"><div class="t" style="left:0.01px;top:-3px;font-size:11px;transform:scaleX(1.0680);transform-origin:0 0">1.0</div></div>
<div class="a" style="left:0;top:209px;width:389px;height:1px;background:#EAEAEA"></div>
<div class="a" style="left:326px;top:196px;width:1px;height:14px;background:#EAEAEA"></div>
<div class="t" style="left:6.45px;top:193px;font-size:11px;transform:scaleX(0.8929);transform-origin:0 0">SCREEN.BITDEPTH</div>
<div class="a" style="left:331px;top:196px;width:56px;height:14px;overflow:hidden"><div class="t" style="left:0.44px;top:-3px;font-size:11px;transform:scaleX(0.9673);transform-origin:0 0">8</div></div>
<div class="a" style="left:0;top:223px;width:389px;height:1px;background:#EAEAEA"></div>
<div class="a" style="left:326px;top:210px;width:1px;height:14px;background:#EAEAEA"></div>
<div class="t" style="left:6.46px;top:207px;font-size:11px;transform:scaleX(0.8805);transform-origin:0 0">SCREEN.HEIGHT</div>
<div class="a" style="left:331px;top:210px;width:56px;height:14px;overflow:hidden"><div class="t" style="left:0.49px;top:-3px;font-size:11px;transform:scaleX(0.9700);transform-origin:0 0">320</div></div>
<div class="a" style="left:0;top:237px;width:389px;height:1px;background:#EAEAEA"></div>
<div class="a" style="left:326px;top:224px;width:1px;height:14px;background:#EAEAEA"></div>
<div class="t" style="left:6.45px;top:221px;font-size:11px;transform:scaleX(0.8930);transform-origin:0 0">SCREEN.ISCOLOR</div>
<div class="a" style="left:331px;top:224px;width:56px;height:14px;overflow:hidden"><div class="t" style="left:0.73px;top:-3px;font-size:11px;transform:scaleX(1.0375);transform-origin:0 0">true</div></div>
<div class="a" style="left:0;top:251px;width:389px;height:1px;background:#EAEAEA"></div>
<div class="a" style="left:326px;top:238px;width:1px;height:14px;background:#EAEAEA"></div>
<div class="t" style="left:6.45px;top:235px;font-size:11px;transform:scaleX(0.8987);transform-origin:0 0">SCREEN.ISTOUCH</div>
<div class="a" style="left:331px;top:238px;width:56px;height:14px;overflow:hidden"><div class="t" style="left:0.76px;top:-3px;font-size:11px;transform:scaleX(0.9290);transform-origin:0 0">false</div></div>
<div class="a" style="left:0;top:265px;width:389px;height:1px;background:#EAEAEA"></div>
<div class="a" style="left:326px;top:252px;width:1px;height:14px;background:#EAEAEA"></div>
<div class="t" style="left:6.45px;top:249px;font-size:11px;transform:scaleX(0.9097);transform-origin:0 0">SCREEN.WIDTH</div>
<div class="a" style="left:331px;top:252px;width:56px;height:14px;overflow:hidden"><div class="t" style="left:0.36px;top:-3px;font-size:11px;transform:scaleX(0.9775);transform-origin:0 0">240</div></div>
<div class="a" style="left:0;top:279px;width:389px;height:1px;background:#EAEAEA"></div>
<div class="a" style="left:326px;top:266px;width:1px;height:14px;background:#EAEAEA"></div>
<div class="t" style="left:6.44px;top:263px;font-size:11px;transform:scaleX(0.9200);transform-origin:0 0">SECURITY.DOMAINS</div>
<div class="a" style="left:331px;top:266px;width:56px;height:14px;overflow:hidden"><div class="t" style="left:0.18px;top:-3px;font-size:11px;transform:scaleX(0.9854);transform-origin:0 0">manufacturer</div></div>
</div>
<div class="a" style="left:604px;top:171px;width:17px;height:301px;background:linear-gradient(90deg,#EEEDE5 0,#F3F1EC 2px,#FEFEFB 50%,#F8F7F2 100%)"></div>
<div class="a" style="left:604px;top:172px;width:15px;height:16px;border:1px solid #FFFFFF;border-radius:2px;background:linear-gradient(135deg,#DCE6FC 0,#C6D4FA 45%,#B5C8F6 100%);box-shadow:1px 1px 0 #A4B0CC,inset -1px -1px 0 #A6B8E6"></div>
<svg style="left:0;top:0" width="710" height="560"><path d="M607.5 182.0 L611.5 178.0 L615.5 182.0" fill="none" stroke="#4D6185" stroke-width="2.2"/></svg>
<div class="a" style="left:604px;top:270px;width:15px;height:161px;border:1px solid #FFFFFF;border-radius:2px;background:linear-gradient(90deg,#C2D0F2 0,#C8D2FC 50%,#B4CAF8 100%);box-shadow:1px 1px 0 #A4B0CC,inset -1px -1px 0 #A8BCEC,inset 1px 1px 0 #E2EAFE"></div>
<div class="a" style="left:608px;top:346px;width:8px;height:1px;background:#F2F6FF"></div>
<div class="a" style="left:608px;top:347px;width:8px;height:1px;background:#98A8DC"></div>
<div class="a" style="left:608px;top:348px;width:8px;height:1px;background:#F2F6FF"></div>
<div class="a" style="left:608px;top:349px;width:8px;height:1px;background:#98A8DC"></div>
<div class="a" style="left:608px;top:350px;width:8px;height:1px;background:#F2F6FF"></div>
<div class="a" style="left:608px;top:351px;width:8px;height:1px;background:#98A8DC"></div>
<div class="a" style="left:608px;top:352px;width:8px;height:1px;background:#F2F6FF"></div>
<div class="a" style="left:608px;top:353px;width:8px;height:1px;background:#98A8DC"></div>
<div class="a" style="left:604px;top:456px;width:15px;height:16px;border:1px solid #FFFFFF;border-radius:2px;background:linear-gradient(135deg,#DCE6FC 0,#C6D4FA 45%,#B5C8F6 100%);box-shadow:1px 1px 0 #A4B0CC,inset -1px -1px 0 #A6B8E6"></div>
<svg style="left:0;top:0" width="710" height="560"><path d="M607.5 462.0 L611.5 466.0 L615.5 462.0" fill="none" stroke="#4D6185" stroke-width="2.2"/></svg>
<div class="a" style="left:215px;top:472px;width:389px;height:17px;background:linear-gradient(180deg,#EEEDE5 0,#F3F1EC 2px,#FEFEFB 50%,#F8F7F2 100%)"></div>
<div class="a" style="left:216px;top:473px;width:16px;height:15px;border:1px solid #FFFFFF;border-radius:2px;background:linear-gradient(135deg,#DCE6FC 0,#C6D4FA 45%,#B5C8F6 100%);box-shadow:1px 1px 0 #A4B0CC,inset -1px -1px 0 #A6B8E6"></div>
<svg style="left:0;top:0" width="710" height="560"><path d="M226.0 476.5 L222.0 480.5 L226.0 484.5" fill="none" stroke="#4D6185" stroke-width="2.2"/></svg>
<div class="a" style="left:233px;top:473px;width:210px;height:15px;border:1px solid #FFFFFF;border-radius:2px;background:linear-gradient(90deg,#C2D0F2 0,#C8D2FC 50%,#B4CAF8 100%);box-shadow:1px 1px 0 #A4B0CC,inset -1px -1px 0 #A8BCEC,inset 1px 1px 0 #E2EAFE"></div>
<div class="a" style="left:334px;top:477px;width:1px;height:7px;background:#F2F6FF"></div>
<div class="a" style="left:335px;top:477px;width:1px;height:7px;background:#98A8DC"></div>
<div class="a" style="left:336px;top:477px;width:1px;height:7px;background:#F2F6FF"></div>
<div class="a" style="left:337px;top:477px;width:1px;height:7px;background:#98A8DC"></div>
<div class="a" style="left:338px;top:477px;width:1px;height:7px;background:#F2F6FF"></div>
<div class="a" style="left:339px;top:477px;width:1px;height:7px;background:#98A8DC"></div>
<div class="a" style="left:340px;top:477px;width:1px;height:7px;background:#F2F6FF"></div>
<div class="a" style="left:341px;top:477px;width:1px;height:7px;background:#98A8DC"></div>
<div class="a" style="left:586px;top:473px;width:16px;height:15px;border:1px solid #FFFFFF;border-radius:2px;background:linear-gradient(135deg,#DCE6FC 0,#C6D4FA 45%,#B5C8F6 100%);box-shadow:1px 1px 0 #A4B0CC,inset -1px -1px 0 #A6B8E6"></div>
<svg style="left:0;top:0" width="710" height="560"><path d="M592.0 476.5 L596.0 480.5 L592.0 484.5" fill="none" stroke="#4D6185" stroke-width="2.2"/></svg>
<div class="a" style="left:604px;top:472px;width:16px;height:17px;background:#EEEDE5"></div>
<div class="a" style="left:633px;top:306px;width:49px;height:21px;border:1px solid #003C74;border-radius:3px;background:linear-gradient(180deg,#FFFFFF 0,#F6F6F2 60%,#EBEAE3 100%);box-shadow:inset 0 -2px 0 #D6D0C5,inset -1px 0 0 #E2DED4"></div>
<div class="t" style="left:633px;top:307px;width:49px;text-align:center;font-size:11px;color:#000;transform:scaleX(0.9542);transform-origin:24.5px 0">Add</div>
<div class="a" style="left:633px;top:334px;width:49px;height:21px;border:1px solid #C9C7BA;border-radius:3px;background:#F5F4EA"></div>
<div class="t" style="left:633px;top:335px;width:49px;text-align:center;font-size:11px;color:#959385;transform:scaleX(0.9601);transform-origin:24.5px 0">Remove</div>
<svg style="left:16px;top:525px" width="16" height="16" viewBox="0 0 16 16">
<circle cx="8" cy="8" r="6.8" fill="#F4F6FB" stroke="#4A4A5E" stroke-width="1.3"/>
<path d="M5.6 6.2 C5.6 3.6 10.4 3.6 10.4 6.2 C10.4 7.8 8 8 8 9.8" fill="none" stroke="#3C3C56" stroke-width="1.7"/>
<rect x="7.1" y="11" width="1.8" height="1.8" fill="#3C3C56"/></svg>
<div class="a" style="left:541px;top:523px;width:74px;height:21px;border:1px solid #003C74;border-radius:3px;background:linear-gradient(180deg,#FFFFFF 0,#F6F6F2 60%,#EBEAE3 100%);box-shadow:inset 0 1px 0 #CEE7FF,inset 0 -1px 0 #6982EE,inset 1px 0 0 #B8D6FB,inset -1px 0 0 #B8D6FB,inset 0 2px 0 #BCD4F6,inset 0 -2px 0 #89ADE4,inset 2px 0 0 #A8C8F6,inset -2px 0 0 #A8C8F6"></div>
<div class="t" style="left:541px;top:524px;width:74px;text-align:center;font-size:11px;color:#000;transform:scaleX(0.8518);transform-origin:37.0px 0">OK</div>
<div class="a" style="left:622px;top:523px;width:74px;height:21px;border:1px solid #003C74;border-radius:3px;background:linear-gradient(180deg,#FFFFFF 0,#F6F6F2 60%,#EBEAE3 100%);box-shadow:inset 0 -2px 0 #D6D0C5,inset -1px 0 0 #E2DED4"></div>
<div class="t" style="left:622px;top:524px;width:74px;text-align:center;font-size:11px;color:#000;transform:scaleX(0.9407);transform-origin:37.0px 0">Cancel</div>
</body></html>
